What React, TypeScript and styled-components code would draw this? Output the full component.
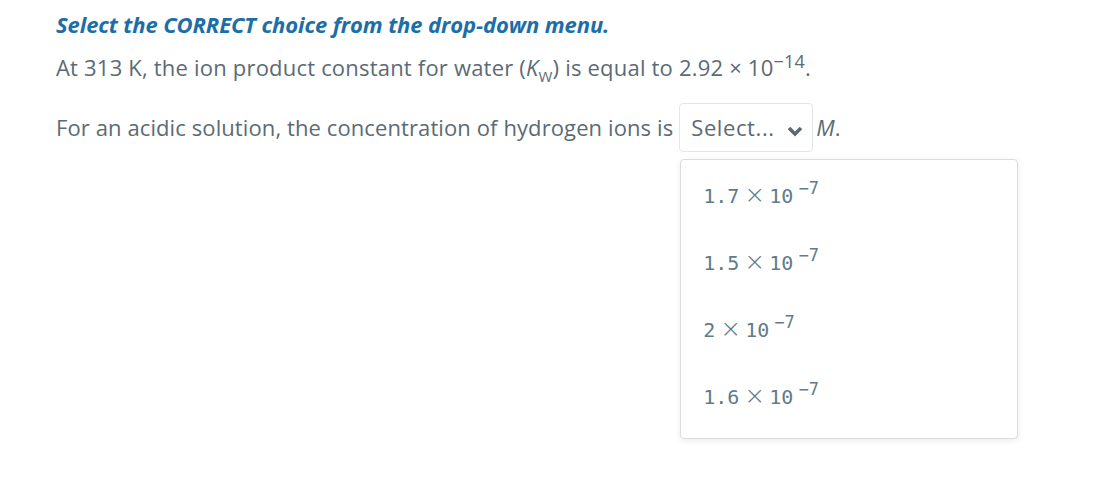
import React from 'react';
import styled, {createGlobalStyle} from 'styled-components';

const GlobalStyle = createGlobalStyle`
  body {
    margin: 0;
    background: #fff;
    font-family: "Open Sans", "Liberation Sans", sans-serif;
  }
`

const Page = styled.div`
  min-height: 488px;
  padding: 9px 56px;
  box-sizing: border-box;
  color: #5b6b75;
  font-size: 22px;
`

const Heading = styled.h2`
  margin: 0;
  font-size: 22px;
  line-height: 30px;
  font-weight: 700;
  font-style: italic;
  color: #1b6ea8;
  letter-spacing: -0.1px;
`

const Paragraph = styled.p`
  margin: 7px 0 0;
  line-height: 30px;
  letter-spacing: 0.2px;
`

const Question = styled.div`
  margin-top: 12px;
  display: flex;
  align-items: flex-start;
  letter-spacing: 0.1px;
`

const QuestionText = styled.span`
  line-height: 30px;
  padding-top: 9px;
`

const SelectWrap = styled.div`
  position: relative;
  margin: 0 3px 0 6px;
`

const SelectBox = styled.div`
  width: 134px;
  height: 49px;
  box-sizing: border-box;
  border: 1px solid #e4e6e8;
  border-radius: 4px;
  display: flex;
  align-items: flex-start;
  justify-content: space-between;
  padding: 8px 9px 0 11px;
  line-height: 30px;
  color: #5b6b75;
  font-size: 22px;
  letter-spacing: 0.6px;
`

const Menu = styled.div`
  position: absolute;
  top: 56px;
  left: 1px;
  width: 338px;
  height: 280px;
  box-sizing: border-box;
  border: 1px solid #dcdcdc;
  border-radius: 4px;
  background: #fff;
  box-shadow: 0 2px 6px rgba(0, 0, 0, 0.08);
  padding-top: 20px;
`

const Option = styled.div`
  height: 67px;
  padding-left: 22px;
  font-family: "DejaVu Sans Mono", monospace;
  font-size: 20px;
  line-height: 30px;
  color: #627b89;
  letter-spacing: 0;
`

const Times = styled.span`
  font-family: "DejaVu Sans", sans-serif;
  font-size: 25px;
  font-weight: 200;
  margin: 0 4px 0 5px;
`

const Sup = styled.span`
  font-size: 17px;
  position: relative;
  top: -9px;
  margin-left: 5px;
`

const Chevron = () => (
    <svg width="16" height="13" viewBox="0 0 16 13" style={{marginTop: 13}}>
        <path d="M2 3 L8 9 L14 3" fill="none" stroke="#5b6b75" strokeWidth="3.6"/>
    </svg>
)

const options = ['1.7', '1.5', '2', '1.6']

export default function App() {
    return (
        <Page>
            <GlobalStyle/>
            <Heading>Select the CORRECT choice from the drop-down menu.</Heading>
            <Paragraph>
                At 313 K, the ion product constant for water (<i>K</i><sub style={{fontSize: 15}}>W</sub>) is equal to 2.92 × 10<sup style={{fontSize: 18}}>−14</sup>.
            </Paragraph>
            <Question>
                <QuestionText>For an acidic solution, the concentration of hydrogen ions is</QuestionText>
                <SelectWrap>
                    <SelectBox>
                        <span>Select...</span>
                        <Chevron/>
                    </SelectBox>
                    <Menu>
                        {options.map(o => (
                            <Option key={o}>
                                {o}<Times>×</Times>10<Sup>−7</Sup>
                            </Option>
                        ))}
                    </Menu>
                </SelectWrap>
                <QuestionText><i>M</i>.</QuestionText>
            </Question>
        </Page>
    );
}
